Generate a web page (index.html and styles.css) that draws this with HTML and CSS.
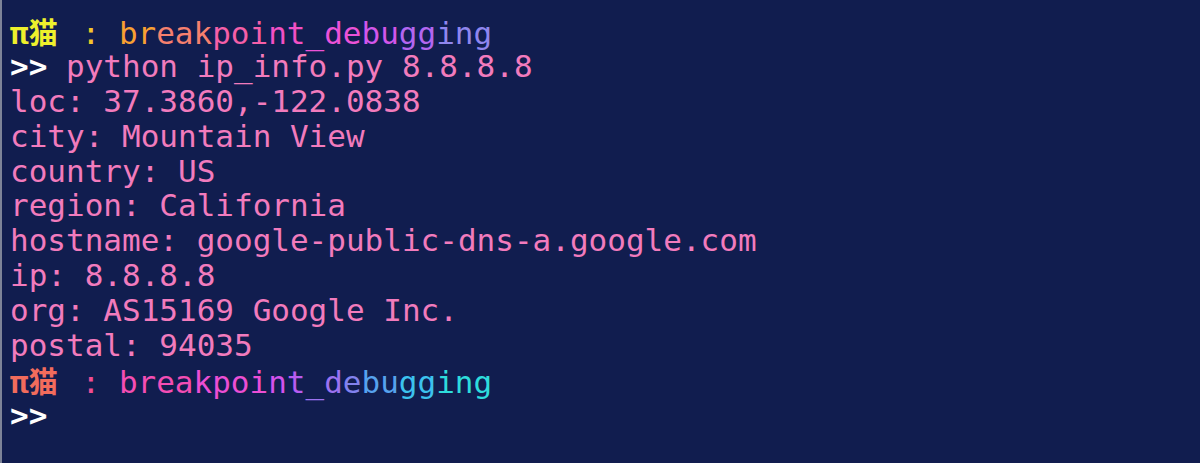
FILE: index.html
```html
<!DOCTYPE html>
<html lang="en">
<head>
    <meta charset="UTF-8">
    <meta name="viewport" content="width=device-width, initial-scale=1.0">
    <title>ip_info terminal</title>
    <link rel="stylesheet" href="styles.css">
</head>
<body>
    <div class="terminal">
        <!-- 提示符 1 -->
        <div class="line"><span class="cat c-y"><span class="pi">π</span><span class="cjk">猫</span></span><span class="c-gold"> :</span> <span class="c-orange">br</span><span class="c-salmon">eak</span><span class="c-pink">poi</span><span class="c-rose">nt</span><span class="c-mag">_de</span><span class="c-vio">bu</span><span class="c-pur">gg</span><span class="c-lav">ing</span></div>
        <div class="line"><span class="prompt">&gt;&gt;</span> python ip_info.py 8.8.8.8</div>
        <div class="line">loc: 37.3860,-122.0838</div>
        <div class="line">city: Mountain View</div>
        <div class="line">country: US</div>
        <div class="line">region: California</div>
        <div class="line">hostname: google-public-dns-a.google.com</div>
        <div class="line">ip: 8.8.8.8</div>
        <div class="line">org: AS15169 Google Inc.</div>
        <div class="line">postal: 94035</div>
        <!-- 提示符 2 -->
        <div class="line"><span class="cat c-coral"><span class="pi">π</span><span class="cjk">猫</span></span><span class="c-hot"> :</span> <span class="c-hot2">brea</span><span class="c-mag2">kpoi</span><span class="c-vio2">n</span><span class="c-pur2">t</span><span class="c-blu1">_d</span><span class="c-blu2">e</span><span class="c-blu3">bu</span><span class="c-cy1">gg</span><span class="c-cy2">ing</span></div>
        <div class="line"><span class="prompt">&gt;&gt;</span></div>
    </div>
</body>
</html>
```

FILE: styles.css
```css
html, body {
    margin: 0;
    height: 100%;
    background: #111d4f;
}
.terminal {
    box-sizing: border-box;
    height: 100%;
    padding: 14px 0 0 8px;
    border-left: 2px solid #7d8398;
    font-family: "DejaVu Sans Mono", "Noto Sans CJK SC", monospace;
    font-size: 31px;
    line-height: 34.9px;
    color: #f27bbd;
}
.line {
    height: 34.9px;
    white-space: pre;
}
.prompt {
    color: #fff;
    font-weight: bold;
}
.cat {
    font-weight: bold;
}
.pi {
    display: inline-block;
    width: 1ch;
}
.cjk {
    display: inline-block;
    width: 2ch;
    font-family: "Noto Sans CJK SC", sans-serif;
    font-size: 29px;
}

/* 第一行彩虹 */
.c-y { color: #eef02c; }
.c-gold { color: #f5c52a; }
.c-orange { color: #f8a032; }
.c-salmon { color: #f6806e; }
.c-pink { color: #f55fa8; }
.c-rose { color: #f250c4; }
.c-mag { color: #ec52d8; }
.c-vio { color: #d256ea; }
.c-pur { color: #b266f0; }
.c-lav { color: #8f86ee; }

/* 第二行彩虹 */
.c-coral { color: #f26c5c; }
.c-hot { color: #f24c92; }
.c-hot2 { color: #f44db4; }
.c-mag2 { color: #ec4ed4; }
.c-vio2 { color: #d452ec; }
.c-pur2 { color: #b85cf0; }
.c-blu1 { color: #9c72f0; }
.c-blu2 { color: #8282ee; }
.c-blu3 { color: #56a2ee; }
.c-cy1 { color: #3cc2ee; }
.c-cy2 { color: #2edcdc; }
```
